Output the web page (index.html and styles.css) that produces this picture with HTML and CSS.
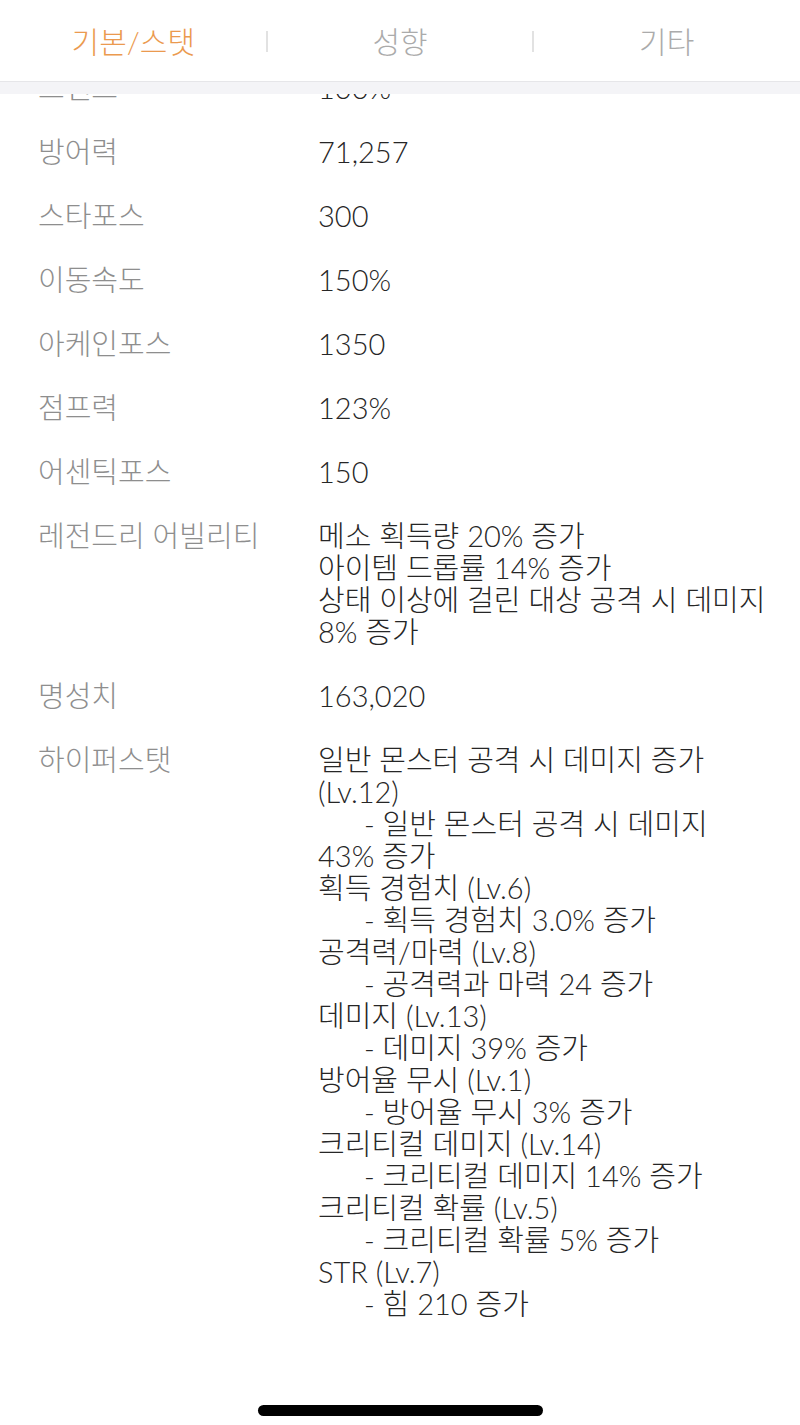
FILE: index.html
```html
<!DOCTYPE html>
<html lang="ko">
<head>
<meta charset="utf-8">
<title>기본/스탯</title>
<link rel="stylesheet" href="styles.css">
</head>
<body>
<div class="screen">
  <header class="tabs">
    <div class="tab active">기본/스탯</div>
    <div class="tab">성향</div>
    <div class="tab">기타</div>
  </header>
  <div class="band"></div>
  <main class="viewport">
    <div class="list">
      <div class="row"><div class="label">스탠스</div><div class="value">100%</div></div>
      <div class="row"><div class="label">방어력</div><div class="value">71,257</div></div>
      <div class="row"><div class="label">스타포스</div><div class="value">300</div></div>
      <div class="row"><div class="label">이동속도</div><div class="value">150%</div></div>
      <div class="row"><div class="label">아케인포스</div><div class="value">1350</div></div>
      <div class="row"><div class="label">점프력</div><div class="value">123%</div></div>
      <div class="row"><div class="label">어센틱포스</div><div class="value">150</div></div>
      <div class="row"><div class="label">레전드리 어빌리티</div><div class="value">
        <div class="line">메소 획득량 20% 증가</div>
        <div class="line">아이템 드롭률 14% 증가</div>
        <div class="line">상태 이상에 걸린 대상 공격 시 데미지<br>8% 증가</div>
      </div></div>
      <div class="row"><div class="label">명성치</div><div class="value">163,020</div></div>
      <div class="row"><div class="label">하이퍼스탯</div><div class="value">
        <div class="line">일반 몬스터 공격 시 데미지 증가<br>(Lv.12)</div>
        <div class="line sub">- 일반 몬스터 공격 시 데미지<br>43% 증가</div>
        <div class="line">획득 경험치 (Lv.6)</div>
        <div class="line sub">- 획득 경험치 3.0% 증가</div>
        <div class="line">공격력/마력 (Lv.8)</div>
        <div class="line sub">- 공격력과 마력 24 증가</div>
        <div class="line">데미지 (Lv.13)</div>
        <div class="line sub">- 데미지 39% 증가</div>
        <div class="line">방어율 무시 (Lv.1)</div>
        <div class="line sub">- 방어율 무시 3% 증가</div>
        <div class="line">크리티컬 데미지 (Lv.14)</div>
        <div class="line sub">- 크리티컬 데미지 14% 증가</div>
        <div class="line">크리티컬 확률 (Lv.5)</div>
        <div class="line sub">- 크리티컬 확률 5% 증가</div>
        <div class="line">STR (Lv.7)</div>
        <div class="line sub">- 힘 210 증가</div>
      </div></div>
    </div>
  </main>
  <div class="home-indicator"></div>
</div>
</body>
</html>
```

FILE: styles.css
```css
* { box-sizing: border-box; }
html, body {
  margin: 0;
  padding: 0;
  background: #ffffff;
}
body {
  font-family: "Lato", "Noto Sans CJK KR", "Noto Sans", sans-serif;
  font-weight: 300;
}
.screen {
  position: relative;
  width: 800px;
  height: 1425px;
  display: flex;
  flex-direction: column;
  overflow: hidden;
}
.tabs {
  display: grid;
  grid-template-columns: repeat(3, 1fr);
  align-items: center;
  height: 82px;
  background: #ffffff;
  border-bottom: 1px solid #e6e6e9;
  flex: none;
}
.tab {
  position: relative;
  text-align: center;
  font-size: 30px;
  color: #ababab;
  line-height: 40px;
}
.tab.active { color: #eb9a4f; }
.tab + .tab::before {
  content: "";
  position: absolute;
  left: -1px;
  top: 10px;
  width: 2px;
  height: 21px;
  background: #e2e2e2;
}
.band {
  height: 12px;
  background: #f4f4f7;
  flex: none;
}
.viewport {
  flex: 1;
  overflow: hidden;
}
.list {
  margin-top: -38px;
}
.row {
  display: flex;
  padding: 16px 0;
  font-size: 29px;
  line-height: 32px;
}
.label {
  width: 318px;
  padding-left: 38px;
  color: #8e8e8e;
  flex: none;
}
.value {
  color: #262626;
  white-space: nowrap;
}
.line.sub {
  text-indent: 46px;
}
.home-indicator {
  position: absolute;
  left: 258px;
  bottom: 9px;
  width: 285px;
  height: 11px;
  border-radius: 6px;
  background: #000000;
}
```
